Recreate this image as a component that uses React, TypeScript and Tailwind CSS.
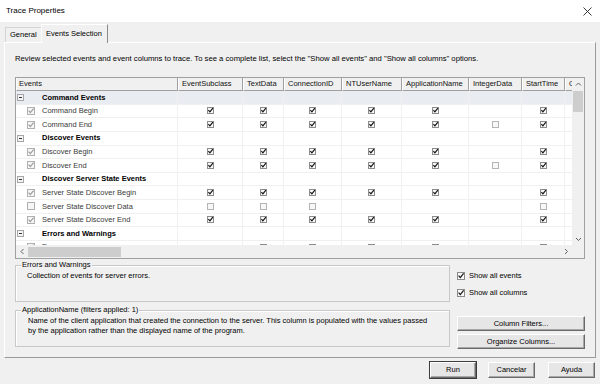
import React from 'react';

type Cell = 0 | 1 | 2; // 0 none, 1 checked, 2 unchecked

const COLS: { name: string; cls: string }[] = [
  { name: 'EventSubclass', cls: 'w-[65px]' },
  { name: 'TextData', cls: 'w-[41px]' },
  { name: 'ConnectionID', cls: 'w-[58px]' },
  { name: 'NTUserName', cls: 'w-[60px]' },
  { name: 'ApplicationName', cls: 'w-[67px]' },
  { name: 'IntegerData', cls: 'w-[53px]' },
  { name: 'StartTime', cls: 'w-[43px]' },
  { name: 'C', cls: 'w-[60px]' },
];

type Row =
  | { kind: 'group'; label: string; selected?: boolean }
  | { kind: 'item'; label: string; ev: boolean; cells: Cell[] };

const ROWS: Row[] = [
  { kind: 'group', label: 'Command Events', selected: true },
  { kind: 'item', label: 'Command Begin', ev: true, cells: [1, 1, 1, 1, 1, 0, 1, 0] },
  { kind: 'item', label: 'Command End', ev: true, cells: [1, 1, 1, 1, 1, 2, 1, 0] },
  { kind: 'group', label: 'Discover Events' },
  { kind: 'item', label: 'Discover Begin', ev: true, cells: [1, 1, 1, 1, 1, 0, 1, 0] },
  { kind: 'item', label: 'Discover End', ev: true, cells: [1, 1, 1, 1, 1, 2, 1, 0] },
  { kind: 'group', label: 'Discover Server State Events' },
  { kind: 'item', label: 'Server State Discover Begin', ev: true, cells: [1, 1, 1, 1, 1, 0, 1, 0] },
  { kind: 'item', label: 'Server State Discover Data', ev: false, cells: [2, 2, 2, 0, 0, 0, 2, 0] },
  { kind: 'item', label: 'Server State Discover End', ev: true, cells: [1, 1, 1, 1, 1, 0, 1, 0] },
  { kind: 'group', label: 'Errors and Warnings' },
  { kind: 'item', label: 'Error', ev: true, cells: [0, 1, 1, 1, 1, 0, 1, 0] },
];

function CellBox({ checked }: { checked: boolean }) {
  return (
    <svg width="7" height="7" viewBox="0 0 7 7" className="block">
      <rect x="0.5" y="0.5" width="6" height="6" fill="#f7f7f7" stroke={checked ? '#8c8c8c' : '#b4b4b4'} />
      {checked && <path d="M1.4 3.2 L2.9 4.9 L5.9 1.2" fill="none" stroke="#111" strokeWidth="1.2" />}
    </svg>
  );
}

function EvBox({ checked }: { checked: boolean }) {
  return (
    <svg width="8" height="8" viewBox="0 0 8 8" className="block shrink-0">
      <rect x="0.5" y="0.5" width="7" height="7" fill="#f6f6f6" stroke="#b0b0b0" />
      {checked && <path d="M1.6 3.7 L3.3 5.6 L6.6 1.6" fill="none" stroke="#9a9a9a" strokeWidth="1.1" />}
    </svg>
  );
}

function OptBox() {
  return (
    <svg width="8" height="8" viewBox="0 0 8 8" className="block shrink-0">
      <rect x="0.5" y="0.5" width="7" height="7" fill="#fafafa" stroke="#8a8a8a" />
      <path d="M1.6 3.7 L3.3 5.6 L6.6 1.4" fill="none" stroke="#111" strokeWidth="1.2" />
    </svg>
  );
}

function Minus() {
  return (
    <svg width="7" height="7" viewBox="0 0 7 7" className="block shrink-0">
      <rect x="0.5" y="0.5" width="6" height="6" fill="#f4f4f4" stroke="#a6a6a6" />
      <path d="M2 3.5 H5" stroke="#333" strokeWidth="1" />
    </svg>
  );
}

function Chevron({ dir }: { dir: 'up' | 'down' | 'left' | 'right' }) {
  const pts =
    dir === 'up' ? '1,4.5 3.5,2 6,4.5' : dir === 'down' ? '1,2 3.5,4.5 6,2' : dir === 'left' ? '4.5,1 2,3.5 4.5,6' : '2,1 4.5,3.5 2,6';
  return (
    <svg width="7" height="7" viewBox="0 0 7 7" className="block">
      <polyline points={pts} fill="none" stroke="#606060" strokeWidth="1" />
    </svg>
  );
}

function Grid() {
  return (
    <div className="w-[570px] h-[182px] border border-[#a0a0a0] flex flex-col bg-white">
      <div className="flex flex-1 min-h-0">
        <div className="flex-1 min-w-0 overflow-hidden">
          {/* header */}
          <div className="flex h-[13px] w-max">
            <div className="w-[162px] shrink-0 h-full bg-[#f0f0f0] border-r border-b border-[#a0a0a0] border-l border-l-white flex items-center pl-[2px] text-[7.5px] text-[#111]">
              Events
            </div>
            {COLS.map((c) => (
              <div
                key={c.name}
                className={`${c.cls} shrink-0 h-full bg-[#f0f0f0] border-r border-b border-[#a0a0a0] border-l border-l-white flex items-center pl-[3px] text-[7.5px] text-[#111] whitespace-nowrap overflow-hidden`}
              >
                {c.name}
              </div>
            ))}
          </div>
          {/* rows */}
          {ROWS.map((r, idx) => (
            <div
              key={idx}
              className={`flex h-[13.64px] w-max border-b border-[#f0f0f0] ${
                r.kind === 'group' && r.selected ? 'bg-[#e9ecf0]' : 'bg-white'
              }`}
            >
              {r.kind === 'group' ? (
                <div className="w-[162px] shrink-0 border-r border-[#f0f0f0] flex items-center pl-[1px]">
                  <Minus />
                  <span className="ml-[18px] font-bold text-[7.5px] text-black whitespace-nowrap leading-none">{r.label}</span>
                </div>
              ) : (
                <div className="w-[162px] shrink-0 border-r border-[#f0f0f0] flex items-center pl-[11px]">
                  <EvBox checked={r.ev} />
                  <span className="ml-[7px] text-[7.5px] text-[#3a3a3a] whitespace-nowrap leading-none">{r.label}</span>
                </div>
              )}
              {COLS.map((c, i) => (
                <div key={c.name} className={`${c.cls} shrink-0 border-r border-[#f0f0f0] flex items-center justify-center`}>
                  {r.kind === 'item' && r.cells[i] !== 0 && <CellBox checked={r.cells[i] === 1} />}
                </div>
              ))}
            </div>
          ))}
        </div>
        {/* vertical scrollbar */}
        <div className="w-[12px] shrink-0 bg-[#f0f0f0] flex flex-col items-center">
          <div className="h-[13px] flex items-center justify-center">
            <Chevron dir="up" />
          </div>
          <div className="w-[10px] h-[21px] bg-[#cdcdcd]" />
          <div className="flex-1" />
          <div className="h-[12px] flex items-center justify-center">
            <Chevron dir="down" />
          </div>
        </div>
      </div>
      {/* horizontal scrollbar */}
      <div className="h-[13px] shrink-0 flex bg-[#f0f0f0]">
        <div className="w-[12px] flex items-center justify-center">
          <Chevron dir="left" />
        </div>
        <div className="w-[93px] h-[10px] self-center bg-[#cdcdcd]" />
        <div className="flex-1" />
        <div className="w-[12px] flex items-center justify-center">
          <Chevron dir="right" />
        </div>
        <div className="w-[12px]" />
      </div>
    </div>
  );
}

function GroupBox({ label, children, h }: { label: string; children: React.ReactNode; h: string }) {
  return (
    <div className={`relative ${h} border border-[#c8c8c8] shadow-[inset_1px_1px_0_#ffffff]`}>
      <span className="absolute left-[5px] top-[-6px] bg-[#f0f0f0] px-[1px] text-[7.5px] leading-[10px] text-black whitespace-nowrap">
        {label}
      </span>
      {children}
    </div>
  );
}

const btnBase =
  'h-[15px] flex items-center justify-center bg-[#e6e6e6] border border-t-white border-l-white border-b-[#6a6a6a] border-r-[#6a6a6a] shadow-[inset_-1px_-1px_0_#a8a8a8] text-[7.5px] text-black leading-none';

export default function App() {
  return (
    <div
      className="w-[600px] h-[384px] bg-[#f0f0f0] flex flex-col overflow-hidden text-black"
      style={{ fontFamily: '"Liberation Sans", Arial, sans-serif' }}
    >
      {/* title bar */}
      <div className="h-[22px] bg-white flex items-center justify-between pl-[6px] pr-[8px] shrink-0">
        <span className="text-[8px] text-black">Trace Properties</span>
        <svg width="9" height="9" viewBox="0 0 9 9" className="block">
          <path d="M0.5 0.5 L8.5 8.5 M8.5 0.5 L0.5 8.5" stroke="#222" strokeWidth="0.9" />
        </svg>
      </div>

      {/* tabs + panel */}
      <div className="px-[4px] shrink-0">
        <div className="h-[20px] flex items-end pl-[1px]">
          <div className="w-[36px] h-[15px] border-t border-l border-[#d4d4d4] flex items-center pl-[4px] text-[7.5px] text-black">
            General
          </div>
          <div className="relative z-10 w-[67px] h-[19px] mb-[-1px] bg-[#f0f0f0] border-t border-l border-white border-r border-r-[#8a8a8a] flex items-start pt-[3px] pl-[4px] text-[7.5px] text-black whitespace-nowrap">
            Events Selection
          </div>
        </div>
        <div className="h-[316px] border border-t-white border-l-white border-r-[#9a9a9a] border-b-[#9a9a9a] pl-[10px] pr-[10px] pt-[11px] flex flex-col">
          <div className="h-[10px] leading-[10px] text-[7.7px] text-black whitespace-nowrap">
            Review selected events and event columns to trace. To see a complete list, select the "Show all events" and "Show all columns" options.
          </div>
          <div className="mt-[13px]">
            <Grid />
          </div>
          <div className="mt-[6px] flex">
            <div className="w-[436px] flex flex-col gap-[8px]">
              <GroupBox label="Errors and Warnings" h="h-[37px]">
                <div className="pl-[11px] pt-[5px] text-[7.5px] leading-[10px] text-black whitespace-nowrap">
                  Collection of events for server errors.
                </div>
              </GroupBox>
              <GroupBox label="ApplicationName (filters applied: 1)" h="h-[37px]">
                <div className="pl-[12px] pt-[5px] text-[7.5px] leading-[10px] text-black whitespace-nowrap">
                  Name of the client application that created the connection to the server. This column is populated with the values passed
                  <br />
                  by the application rather than the displayed name of the program.
                </div>
              </GroupBox>
            </div>
            <div className="ml-[7px] w-[128px] flex flex-col">
              <div className="mt-[6px] h-[10px] flex items-center">
                <OptBox />
                <span className="ml-[4px] text-[7.5px] leading-none whitespace-nowrap">Show all events</span>
              </div>
              <div className="mt-[7px] h-[10px] flex items-center">
                <OptBox />
                <span className="ml-[4px] text-[7.5px] leading-none whitespace-nowrap">Show all columns</span>
              </div>
              <div className={`mt-[18px] w-[128px] ${btnBase}`}>Column Filters...</div>
              <div className={`mt-[3px] w-[128px] ${btnBase}`}>Organize Columns...</div>
            </div>
          </div>
        </div>
      </div>

      {/* footer buttons */}
      <div className="mt-[4px] flex justify-end pr-[5px] gap-[12px]">
        <div className={`w-[46px] h-[16px] ${btnBase} ring-1 ring-[#3c3c3c]`}>Run</div>
        <div className={`w-[47px] h-[16px] ${btnBase}`}>Cancelar</div>
        <div className={`w-[47px] h-[16px] ${btnBase} ml-[1px]`}>Ayuda</div>
      </div>
    </div>
  );
}
